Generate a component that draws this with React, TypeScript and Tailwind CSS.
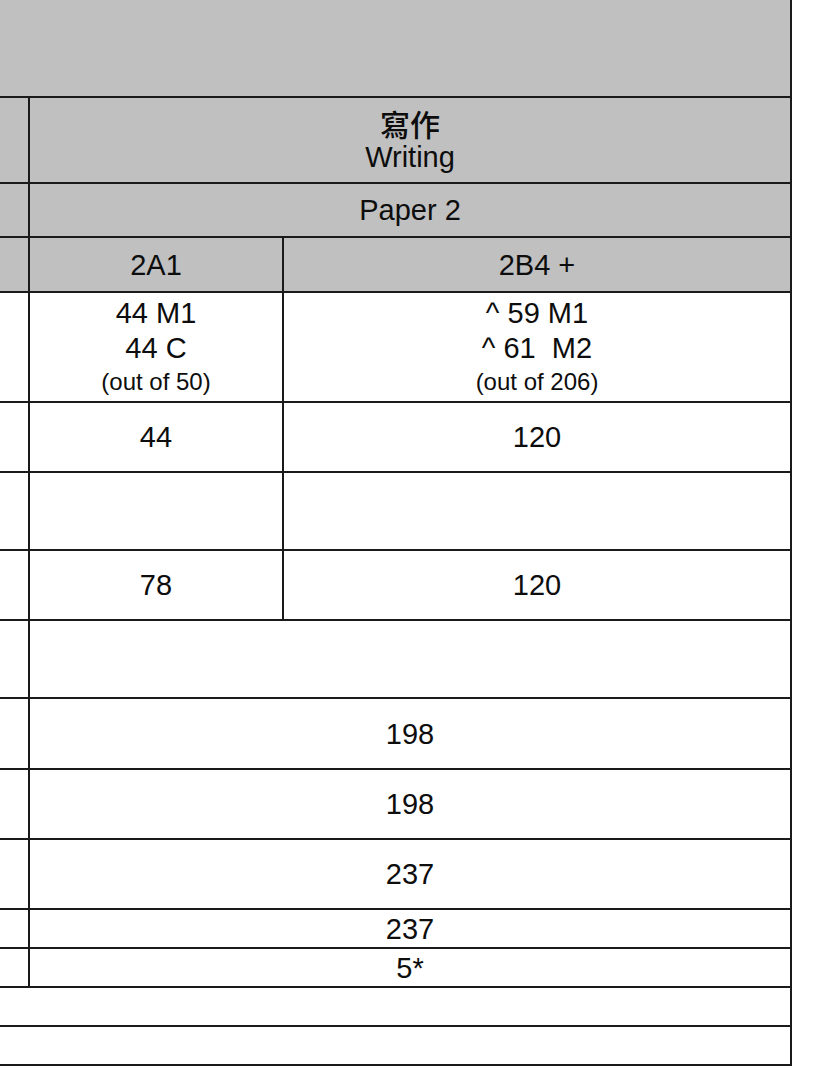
import React from 'react';

// cell helpers
const gray = 'bg-[#c0c0c0]';
const white = 'bg-white';
const center = 'flex flex-col items-center justify-center text-center';

export default function App() {
  return (
    <div
      className="min-h-screen bg-white text-[#0d0d0d] text-[29px] leading-[34px]"
      style={{ fontFamily: '"Liberation Sans", Arial, "Noto Sans CJK TC", sans-serif' }}
    >
      <div className="grid w-[792px] gap-[2px] bg-[#1a1a1a] pr-[2px] pb-[2px] grid-cols-[28px_252px_506px] grid-rows-[96px_84px_52px_53px_108px_68px_76px_68px_76px_69px_68px_68px_37px_37px_37px_37px]">
        {/* header block */}
        <div className={`col-span-3 ${gray}`} />

        <div className={gray} />
        <div className={`col-span-2 ${gray} ${center}`}>
          <span
            style={{ fontFamily: '"Noto Sans CJK TC", "Liberation Sans", sans-serif' }}
            className="text-[30px] font-medium leading-[34px]"
          >
            寫作
          </span>
          <span>Writing</span>
        </div>

        <div className={gray} />
        <div className={`col-span-2 ${gray} ${center}`}>Paper 2</div>

        <div className={gray} />
        <div className={`${gray} ${center}`}>2A1</div>
        <div className={`${gray} ${center}`}>2B4 +</div>

        {/* marks */}
        <div className={white} />
        <div className={`${white} ${center}`}>
          <span className="leading-[35px]">44 M1</span>
          <span className="leading-[35px]">44 C</span>
          <span className="text-[24px] leading-[32px]">(out of 50)</span>
        </div>
        <div className={`${white} ${center}`}>
          <span className="leading-[35px]">^ 59 M1</span>
          <span className="leading-[35px] whitespace-pre">^ 61  M2</span>
          <span className="text-[24px] leading-[32px]">(out of 206)</span>
        </div>

        <div className={white} />
        <div className={`${white} ${center}`}>44</div>
        <div className={`${white} ${center}`}>120</div>

        <div className={white} />
        <div className={white} />
        <div className={white} />

        <div className={white} />
        <div className={`${white} ${center}`}>78</div>
        <div className={`${white} ${center}`}>120</div>

        <div className={white} />
        <div className={`col-span-2 ${white}`} />

        <div className={white} />
        <div className={`col-span-2 ${white} ${center}`}>198</div>

        <div className={white} />
        <div className={`col-span-2 ${white} ${center}`}>198</div>

        <div className={white} />
        <div className={`col-span-2 ${white} ${center}`}>237</div>

        <div className={white} />
        <div className={`col-span-2 ${white} ${center}`}>237</div>

        <div className={white} />
        <div className={`col-span-2 ${white} ${center}`}>5*</div>

        <div className={`col-span-3 ${white}`} />
        <div className={`col-span-3 ${white}`} />
      </div>
    </div>
  );
}
